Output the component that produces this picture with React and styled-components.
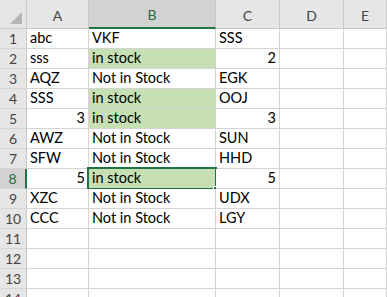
import styled, { createGlobalStyle } from "styled-components";

const GlobalStyle = createGlobalStyle`
  html, body { margin: 0; padding: 0; background: #fff; overflow: hidden; }
`;

const COLS = ["A", "B", "C", "D", "E"];
const SELECTED_COL = "B";
const SELECTED_ROW = 8;

// columns A, B, C; B is green when "in stock"
const data = [
  ["abc", "VKF", "SSS"],
  ["sss", "in stock", 2],
  ["AQZ", "Not in Stock", "EGK"],
  ["SSS", "in stock", "OOJ"],
  [3, "in stock", 3],
  ["AWZ", "Not in Stock", "SUN"],
  ["SFW", "Not in Stock", "HHD"],
  [5, "in stock", 5],
  ["XZC", "Not in Stock", "UDX"],
  ["CCC", "Not in Stock", "LGY"],
  ["", "", ""],
  ["", "", ""],
  ["", "", ""],
  ["", "", ""],
];

const Sheet = styled.div`
  display: grid;
  grid-template-columns: 27px 62px 127px 64px 64px 1fr;
  grid-template-rows: 29px;
  grid-auto-rows: 20px;
  width: 387px;
  height: 297px;
  overflow: hidden;
  font-family: Lato, "Liberation Sans", sans-serif;
  font-size: 14.5px;
`;

const Corner = styled.div`
  position: relative;
  background: #e6e6e6;
  border-right: 1px solid #c8c8c8;
  border-bottom: 1px solid #c8c8c8;
  &::after {
    content: "";
    position: absolute;
    right: 4px;
    bottom: 4px;
    width: 0;
    height: 0;
    border-left: 12px solid transparent;
    border-bottom: 12px solid #b4b4b4;
  }
`;

const ColHead = styled.div`
  display: flex;
  align-items: flex-end;
  justify-content: center;
  padding-bottom: 4px;
  box-sizing: border-box;
  background: ${(p) => (p.$active ? "#d2d2d2" : "#e6e6e6")};
  color: ${(p) => (p.$active ? "#1e6b41" : "#444")};
  border-right: 1px solid #c8c8c8;
  border-bottom: ${(p) => (p.$active ? "2px solid #217346" : "1px solid #c8c8c8")};
  font-size: 14px;
`;

const RowHead = styled.div`
  display: flex;
  align-items: flex-end;
  justify-content: center;
  padding-bottom: 1px;
  box-sizing: border-box;
  background: ${(p) => (p.$active ? "#d2d2d2" : "#e6e6e6")};
  color: ${(p) => (p.$active ? "#1e6b41" : "#444")};
  border-right: ${(p) => (p.$active ? "2px solid #217346" : "1px solid #c8c8c8")};
  border-bottom: 1px solid #d4d4d4;
  font-size: 14px;
`;

const Cell = styled.div`
  position: relative;
  display: flex;
  align-items: flex-end;
  justify-content: ${(p) => (p.$num ? "flex-end" : "flex-start")};
  padding: 0 3px 1px 3px;
  box-sizing: border-box;
  background: ${(p) => (p.$green ? "#c6e0b4" : "#fff")};
  border-right: 1px solid ${(p) => (p.$green ? "#c6e0b4" : "#d4d4d4")};
  border-bottom: 1px solid #d4d4d4;
  color: #000;
  white-space: nowrap;
  line-height: 18px;
`;

const Selection = styled.div`
  position: absolute;
  left: -2px;
  top: -2px;
  right: -2px;
  bottom: -2px;
  border: 2px solid #217346;
  pointer-events: none;
  &::after {
    content: "";
    position: absolute;
    right: -5px;
    bottom: -5px;
    width: 5px;
    height: 5px;
    background: #217346;
    border: 1px solid #fff;
  }
`;

export default function App() {
  return (
    <>
      <GlobalStyle />
      <Sheet>
        <Corner />
        {COLS.map((c) => (
          <ColHead key={c} $active={c === SELECTED_COL}>{c}</ColHead>
        ))}
        {data.map((row, i) => {
          const r = i + 1;
          const green = row[1] === "in stock";
          return [
            <RowHead key={`h${r}`} $active={r === SELECTED_ROW}>{r}</RowHead>,
            ...[0, 1, 2].map((j) => (
              <Cell
                key={`${r}-${j}`}
                $num={typeof row[j] === "number"}
                $green={j === 1 && green}
              >
                {row[j]}
                {j === 1 && r === SELECTED_ROW && <Selection />}
              </Cell>
            )),
            <Cell key={`${r}-d`} />,
            <Cell key={`${r}-e`} />,
          ];
        })}
      </Sheet>
    </>
  );
}
